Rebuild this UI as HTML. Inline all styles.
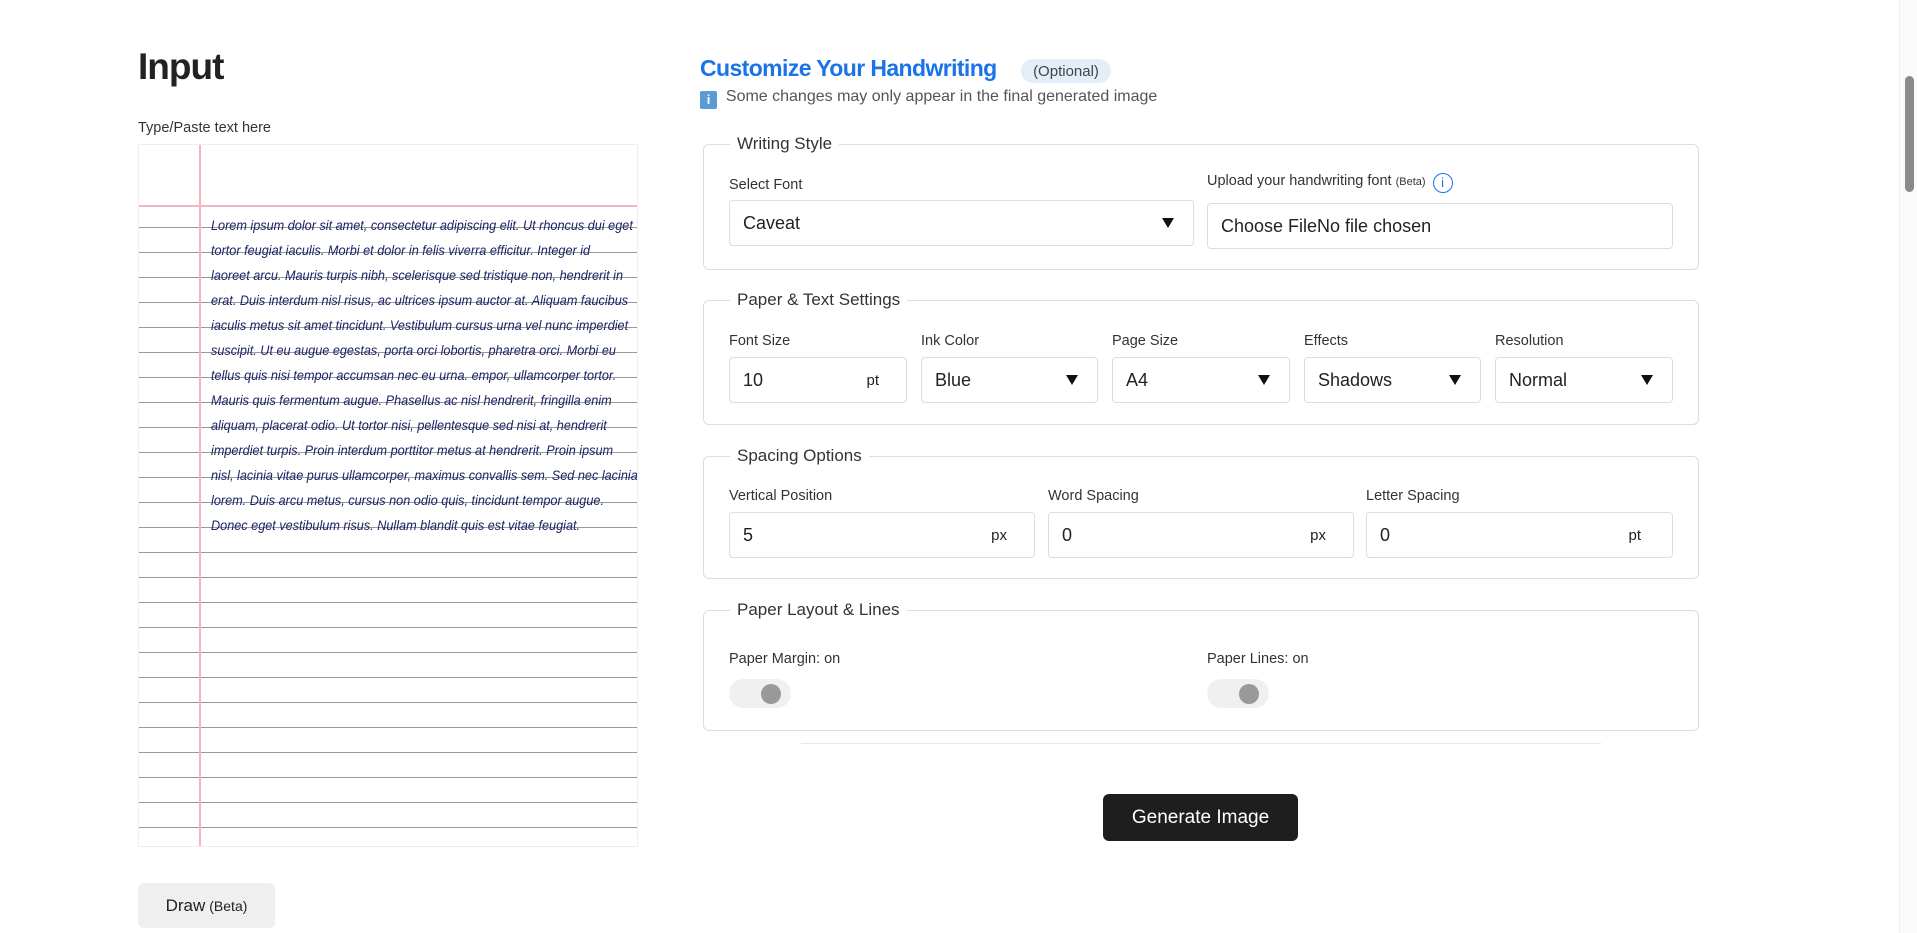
<!DOCTYPE html>
<html><head><meta charset="utf-8"><style>
*{box-sizing:border-box;margin:0;padding:0}
body{width:1917px;height:933px;overflow:hidden;background:#fff;font-family:"Liberation Sans",sans-serif;color:#333;position:relative}
.a{position:absolute}
h1{position:absolute;left:138px;top:46px;font-size:37px;font-weight:bold;color:#222;letter-spacing:-1px}
.paper{left:138px;top:144px;width:500px;height:703px;border:1px solid #eee;overflow:hidden;
background:repeating-linear-gradient(to bottom,transparent 0,transparent 24px,#999 24px,#999 25px);background-position:0 208px;background-size:100% 25px;background-repeat:repeat-y}
.paper .top{position:absolute;left:0;top:0;width:100%;height:62px;background:#fff;border-bottom:2px solid #f2b6c1}
.paper .vm{position:absolute;left:60px;top:0;width:2px;height:100%;background:#f2b6c1}
.txt{position:absolute;left:72px;top:64px;font-family:"Liberation Sans",sans-serif;font-style:italic;font-size:14px;line-height:25px;color:#1c2466;white-space:nowrap;padding-top:4px;transform:scaleX(0.905);transform-origin:left top}
.btn{left:138px;top:883px;width:137px;height:45px;background:#efefef;border-radius:6px;font-size:17px;color:#222;display:flex;align-items:center;justify-content:center}
.btn small{font-size:14px;margin-left:4px}
.fs{position:absolute;left:703px;width:996px;border:1px solid #ddd;border-radius:6px}
.lg{position:absolute;top:-11px;left:26px;background:#fff;padding:0 7px;font-size:17px;color:#333}
.lb{position:absolute;font-size:14.5px;color:#333}
.in{position:absolute;height:46px;border:1px solid #ddd;border-radius:4px;font-size:18px;color:#222;display:flex;align-items:center;padding:0 13px;justify-content:space-between}
.in .u{font-size:15px;margin-right:14px}
.arr{width:0;height:0;border-left:6px solid transparent;border-right:6px solid transparent;border-top:10px solid #111;margin-right:6px}
.tg{position:absolute;width:62px;height:29px;border-radius:15px;background:#f0f0f0}
.tg::after{content:"";position:absolute;right:10px;top:5px;width:20px;height:20px;border-radius:50%;background:#999}
</style></head><body>
<h1>Input</h1>
<div class="a" style="left:138px;top:120px;font-size:14.5px;color:#333">Type/Paste text here</div>
<div class="a paper"><div class="top"></div><div class="vm"></div>
<div class="txt">Lorem ipsum dolor sit amet, consectetur adipiscing elit. Ut rhoncus dui eget<br>tortor feugiat iaculis. Morbi et dolor in felis viverra efficitur. Integer id<br>laoreet arcu. Mauris turpis nibh, scelerisque sed tristique non, hendrerit in<br>erat. Duis interdum nisl risus, ac ultrices ipsum auctor at. Aliquam faucibus<br>iaculis metus sit amet tincidunt. Vestibulum cursus urna vel nunc imperdiet<br>suscipit. Ut eu augue egestas, porta orci lobortis, pharetra orci. Morbi eu<br>tellus quis nisi tempor accumsan nec eu urna. empor, ullamcorper tortor.<br>Mauris quis fermentum augue. Phasellus ac nisl hendrerit, fringilla enim<br>aliquam, placerat odio. Ut tortor nisi, pellentesque sed nisi at, hendrerit<br>imperdiet turpis. Proin interdum porttitor metus at hendrerit. Proin ipsum<br>nisl, lacinia vitae purus ullamcorper, maximus convallis sem. Sed nec lacinia<br>lorem. Duis arcu metus, cursus non odio quis, tincidunt tempor augue.<br>Donec eget vestibulum risus. Nullam blandit quis est vitae feugiat.</div></div>
<div class="a btn">Draw <small>(Beta)</small></div>

<div class="a" style="left:700px;top:55px;font-size:23px;font-weight:bold;color:#1a73e8;letter-spacing:-0.6px">Customize Your Handwriting</div>
<div class="a" style="left:1021px;top:59px;width:90px;height:24px;border-radius:12px;background:#e3eef9;font-size:15px;color:#444;display:flex;align-items:center;justify-content:center">(Optional)</div>
<div class="a" style="left:700px;top:88px;font-size:16px;color:#555"><span style="display:inline-block;width:17px;height:18px;background:#5b9bd5;color:#fff;font-size:13px;text-align:center;line-height:18px;border-radius:2px;font-weight:bold;vertical-align:-3px">i</span>&nbsp; Some changes may only appear in the final generated image</div>

<div class="fs" style="top:144px;height:126px"><div class="lg">Writing Style</div>
<div class="lb" style="left:25px;top:32px">Select Font</div>
<div class="in" style="left:25px;top:55px;width:465px">Caveat<span class="arr"></span></div>
<div class="lb" style="left:503px;top:28px">Upload your handwriting font <small style="font-size:11px">(Beta)</small> <span style="display:inline-block;width:20px;height:20px;border:1.5px solid #1a73e8;border-radius:50%;color:#1a73e8;font-size:13px;text-align:center;line-height:17px;vertical-align:-2px;margin-left:3px">i</span></div>
<div class="in" style="left:503px;top:58px;width:466px">Choose FileNo file chosen</div>
</div>

<div class="fs" style="top:300px;height:125px"><div class="lg">Paper &amp; Text Settings</div>
<div class="lb" style="left:25px;top:32px">Font Size</div><div class="in" style="left:25px;top:56px;width:178px">10<span class="u">pt</span></div>
<div class="lb" style="left:217px;top:32px">Ink Color</div><div class="in" style="left:217px;top:56px;width:177px">Blue<span class="arr"></span></div>
<div class="lb" style="left:408px;top:32px">Page Size</div><div class="in" style="left:408px;top:56px;width:178px">A4<span class="arr"></span></div>
<div class="lb" style="left:600px;top:32px">Effects</div><div class="in" style="left:600px;top:56px;width:177px">Shadows<span class="arr"></span></div>
<div class="lb" style="left:791px;top:32px">Resolution</div><div class="in" style="left:791px;top:56px;width:178px">Normal<span class="arr"></span></div>
</div>

<div class="fs" style="top:456px;height:123px"><div class="lg">Spacing Options</div>
<div class="lb" style="left:25px;top:31px">Vertical Position</div><div class="in" style="left:25px;top:55px;width:306px">5<span class="u">px</span></div>
<div class="lb" style="left:344px;top:31px">Word Spacing</div><div class="in" style="left:344px;top:55px;width:306px">0<span class="u">px</span></div>
<div class="lb" style="left:662px;top:31px">Letter Spacing</div><div class="in" style="left:662px;top:55px;width:307px">0<span class="u" style="margin-right:18px">pt</span></div>
</div>

<div class="fs" style="top:610px;height:121px"><div class="lg">Paper Layout &amp; Lines</div>
<div class="lb" style="left:25px;top:40px">Paper Margin: on</div><div class="tg" style="left:25px;top:68px"></div>
<div class="lb" style="left:503px;top:40px">Paper Lines: on</div><div class="tg" style="left:503px;top:68px"></div>
</div>
<div class="a" style="left:801px;top:743px;width:800px;height:1px;background:#e8e8e8"></div>
<div class="a" style="left:1103px;top:794px;width:195px;height:47px;background:#1e1e1e;border-radius:6px;color:#fff;font-size:19px;display:flex;align-items:center;justify-content:center">Generate Image</div>

<div class="a" style="left:1899px;top:0;width:18px;height:933px;background:#fafafa;border-left:1px solid #eee"></div>
<div class="a" style="left:1905px;top:76px;width:9px;height:116px;background:#8a8a8a;border-radius:5px"></div>
</body></html>
